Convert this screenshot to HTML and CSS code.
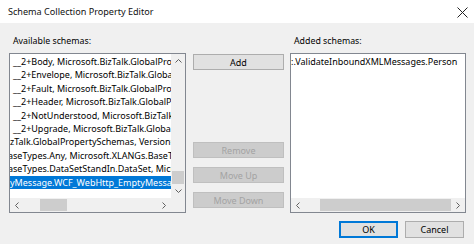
FILE: index.html
```html
<!DOCTYPE html>
<html lang="en">
<head>
    <meta charset="UTF-8">
    <meta name="viewport" content="width=device-width, initial-scale=1.0">
    <title>Schema Collection Property Editor</title>
    <link rel="stylesheet" href="styles.css">
</head>
<body>
    <div class="window">
        <div class="titlebar">
            <span class="title">Schema Collection Property Editor</span>
            <svg class="close" width="11" height="11" viewBox="0 0 11 11"><path d="M0.5 0.5L10.5 10.5M10.5 0.5L0.5 10.5" stroke="#222" stroke-width="1"/></svg>
        </div>
        <div class="content">
            <div class="panes">
                <div class="pane">
                    <div class="label">Available schemas:</div>
                    <div class="listbox">
                        <div class="list-main">
                            <div class="items">
                                <div class="item">__2+Body, Microsoft.BizTalk.GlobalPropertySchemas</div>
                                <div class="item">__2+Envelope, Microsoft.BizTalk.GlobalPropertySchemas</div>
                                <div class="item">__2+Fault, Microsoft.BizTalk.GlobalPropertySchemas</div>
                                <div class="item">__2+Header, Microsoft.BizTalk.GlobalPropertySchemas</div>
                                <div class="item">__2+NotUnderstood, Microsoft.BizTalk.GlobalPropertySchemas</div>
                                <div class="item">__2+Upgrade, Microsoft.BizTalk.GlobalPropertySchemas</div>
                                <div class="item cut">zTalk.GlobalPropertySchemas, Version=3.0.1.0</div>
                                <div class="item cut2">aseTypes.Any, Microsoft.XLANGs.BaseTypes</div>
                                <div class="item cut2">aseTypes.DataSetStandIn.DataSet, Microsoft.XLANGs</div>
                                <div class="item cut selected">yMessage.WCF_WebHttp_EmptyMessage</div>
                            </div>
                            <div class="vscroll">
                                <div class="arrow"><svg width="7" height="4" viewBox="0 0 7 4"><path d="M0.5 3.5L3.5 0.5L6.5 3.5" fill="none" stroke="#606060"/></svg></div>
                                <div class="vtrack"><div class="vthumb"></div></div>
                                <div class="arrow"><svg width="7" height="4" viewBox="0 0 7 4"><path d="M0.5 0.5L3.5 3.5L6.5 0.5" fill="none" stroke="#606060"/></svg></div>
                            </div>
                        </div>
                        <div class="hscroll">
                            <div class="arrow"><svg width="4" height="7" viewBox="0 0 4 7"><path d="M3.5 0.5L0.5 3.5L3.5 6.5" fill="none" stroke="#606060"/></svg></div>
                            <div class="htrack"><div class="hthumb short"></div></div>
                            <div class="arrow"><svg width="4" height="7" viewBox="0 0 4 7"><path d="M0.5 0.5L3.5 3.5L0.5 6.5" fill="none" stroke="#606060"/></svg></div>
                            <div class="corner"></div>
                        </div>
                    </div>
                </div>

                <div class="actions">
                    <button class="btn">Add</button>
                    <div class="lower">
                        <button class="btn" disabled>Remove</button>
                        <button class="btn" disabled>Move Up</button>
                        <button class="btn" disabled>Move Down</button>
                    </div>
                </div>

                <div class="pane">
                    <div class="label">Added schemas:</div>
                    <div class="listbox">
                        <div class="list-main">
                            <div class="items">
                                <div class="item cut">:.ValidateInboundXMLMessages.Person</div>
                            </div>
                        </div>
                        <div class="hscroll">
                            <div class="arrow"><svg width="4" height="7" viewBox="0 0 4 7"><path d="M3.5 0.5L0.5 3.5L3.5 6.5" fill="none" stroke="#606060"/></svg></div>
                            <div class="htrack"><div class="hthumb long"></div></div>
                            <div class="arrow"><svg width="4" height="7" viewBox="0 0 4 7"><path d="M0.5 0.5L3.5 3.5L0.5 6.5" fill="none" stroke="#606060"/></svg></div>
                        </div>
                    </div>
                </div>
            </div>

            <div class="footer">
                <button class="btn default">OK</button>
                <button class="btn">Cancel</button>
            </div>
        </div>
    </div>
</body>
</html>
```

FILE: styles.css
```css
* {
    margin: 0;
    padding: 0;
    box-sizing: border-box;
    font-family: "Noto Sans", "Open Sans", sans-serif;
}

body {
    width: 474px;
    height: 244px;
    overflow: hidden;
    background: #f0f0f0;
    color: #000;
    font-size: 8.9px;
}

.window {
    width: 474px;
    height: 244px;
    display: flex;
    flex-direction: column;
}

.titlebar {
    height: 23px;
    background: #fff;
    display: flex;
    align-items: center;
    justify-content: space-between;
    padding: 0 6px 0 8px;
    font-size: 9.1px;
    color: #111;
}

.close {
    margin-top: 2px;
}

.content {
    flex: 1;
    background: #f0f0f0;
    padding: 12px 8px 0 9px;
}

.panes {
    display: flex;
    gap: 7px;
}

.pane {
    width: 177px;
    display: flex;
    flex-direction: column;
}

.pane + .actions + .pane {
    margin-left: -1px;
}

.label {
    height: 18px;
    padding-left: 4px;
    line-height: 13px;
    font-size: 8.8px;
}

.listbox {
    height: 160px;
    background: #fff;
    border: 1px solid #828790;
    display: flex;
    flex-direction: column;
}

.list-main {
    flex: 1;
    display: flex;
    min-height: 0;
}

.items {
    flex: 1;
    overflow: hidden;
    padding-top: 1px;
}

.item {
    height: 13.4px;
    line-height: 13.4px;
    padding-left: 3px;
    white-space: nowrap;
    overflow: hidden;
    font-size: 9px;
}

.item.cut {
    padding-left: 0;
}

.item.cut2 {
    text-indent: -2px;
    padding-left: 0;
}

.item.selected {
    background: #0078d7;
    color: #fff;
}

.vscroll {
    width: 14px;
    background: #f0f0f0;
    display: flex;
    flex-direction: column;
}

.arrow {
    width: 14px;
    height: 14px;
    display: flex;
    align-items: center;
    justify-content: center;
    flex-shrink: 0;
}

.vtrack {
    flex: 1;
    display: flex;
    flex-direction: column;
    justify-content: flex-end;
}

.vthumb {
    height: 13px;
    margin: 0 1px;
    background: #cdcdcd;
}

.hscroll {
    height: 14px;
    background: #f0f0f0;
    display: flex;
}

.htrack {
    flex: 1;
    display: flex;
    align-items: stretch;
    padding: 1px 0;
}

.hthumb {
    background: #cdcdcd;
}

.hthumb.short {
    width: 27px;
    margin-left: 16px;
}

.hthumb.long {
    flex: 1;
    margin-left: 15px;
}

.corner {
    width: 14px;
    background: #f0f0f0;
}

.actions {
    width: 91px;
    padding-top: 19px;
    display: flex;
    flex-direction: column;
}

.lower {
    margin-top: 72px;
    display: flex;
    flex-direction: column;
    gap: 9px;
}

.btn {
    height: 16px;
    background: #e1e1e1;
    border: 1px solid #adadad;
    font-size: 9px;
    color: #000;
    line-height: 1;
    padding: 0;
}

.btn:disabled {
    background: #cccccc;
    border-color: #bfbfbf;
    color: #a3a3a3;
}

.actions .btn {
    width: 91px;
}

.footer {
    display: flex;
    justify-content: flex-end;
    gap: 7px;
    padding: 8px 2px 0 0;
}

.footer .btn {
    width: 59px;
    height: 17px;
}

.btn.default {
    border-color: #0078d7;
    box-shadow: inset 0 0 0 1px #0078d7;
}
```
